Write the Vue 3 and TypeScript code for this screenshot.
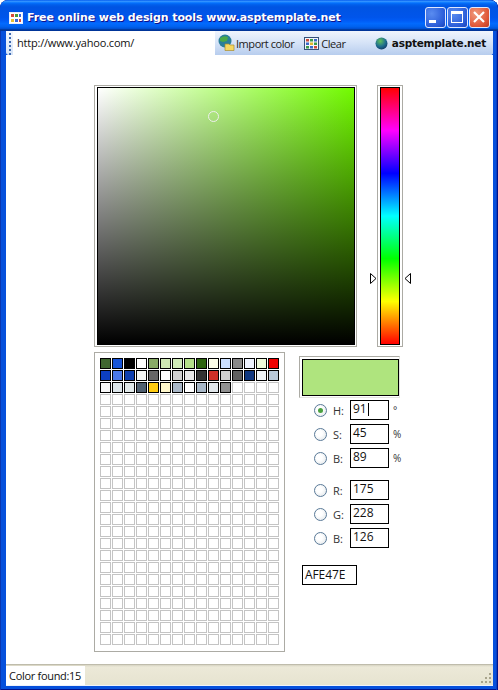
<script setup lang="ts">
const filled: string[] = [
  '#3f6630','#1854d8','#000000','#ffffff','#88aa66','#cfe8b4','#cfeab8','#b5e08a','#2e6410','#fbfde8','#cce0ff','#888888','#eef3ff','#eefadc','#ee0000',
  '#0d3fbf','#4a78e8','#0f40b0','#f6f8f6','#666666','#ffffff','#cfcfcf','#e8e8e8','#333333','#d03028','#d0d0d0','#606060','#103880','#eef4f8','#b8c8d8',
  '#f8f8f8','#dde6ea','#e2eaea','#506070','#ffcc11','#fff8cc','#aab8c8','#ffffff','#a8b8c8','#e0e6ea','#909090',
]
const cells = Array.from({ length: 15 * 24 }, (_, i) => filled[i] ?? '')
const hsb = [
  { l: 'H', v: '91', u: '°', on: true, caret: true },
  { l: 'S', v: '45', u: '%', on: false, caret: false },
  { l: 'B', v: '89', u: '%', on: false, caret: false },
]
const rgb = [
  { l: 'R', v: '175' },
  { l: 'G', v: '228' },
  { l: 'B', v: '126' },
]
</script>

<template>
  <div class="window">
    <header class="titlebar">
      <svg class="app-icon" width="14" height="12" viewBox="0 0 14 12">
        <rect x="0.5" y="0.5" width="13" height="11" fill="#fff" stroke="#e8eefc" />
        <rect x="2" y="2" width="3" height="3" fill="#d8483a" /><rect x="6" y="2" width="3" height="3" fill="#4a9a3a" /><rect x="10" y="2" width="2" height="3" fill="#3a68d8" />
        <rect x="2" y="7" width="3" height="3" fill="#e8c030" /><rect x="6" y="7" width="3" height="3" fill="#3a68d8" /><rect x="10" y="7" width="2" height="3" fill="#d8483a" />
      </svg>
      <span class="title">Free online web design tools www.asptemplate.net</span>
      <div class="winbtns">
        <div class="wb blue">
          <svg width="21" height="21" viewBox="0 0 21 21"><rect x="4" y="13" width="7" height="3" fill="#fff" /></svg>
        </div>
        <div class="wb blue">
          <svg width="21" height="21" viewBox="0 0 21 21"><rect x="4.5" y="4.5" width="11" height="11" fill="none" stroke="#fff" /><rect x="4" y="4" width="12" height="3" fill="#fff" /></svg>
        </div>
        <div class="wb red">
          <svg width="21" height="21" viewBox="0 0 21 21"><path d="M5 5 L15 15 M15 5 L5 15" stroke="#fff" stroke-width="2.2" /></svg>
        </div>
      </div>
    </header>

    <nav class="toolbar">
      <div class="grip"></div>
      <div class="url">http://www.yahoo.com/</div>
      <div class="tools">
        <div class="tool import">
          <svg width="18" height="18" viewBox="0 0 18 18">
            <circle cx="8" cy="7" r="6.5" fill="#2a7f9a" />
            <path d="M3 4 Q7 1 11 3 L10 7 L6 8 L3 7 Z" fill="#4aa84a" />
            <path d="M8 10 H12 L13 11 H17 V16.5 H8 Z" fill="#f6d860" stroke="#a88c30" stroke-width="0.7" />
          </svg>
          <span>Import color</span>
        </div>
        <div class="tool clear">
          <svg width="15" height="13" viewBox="0 0 15 13">
            <rect x="0.5" y="0.5" width="14" height="12" fill="#f4f6fa" stroke="#33507a" />
            <rect x="2" y="2" width="3" height="2.5" fill="#c94a3a" /><rect x="6" y="2" width="3" height="2.5" fill="#3a9a4a" /><rect x="10" y="2" width="3" height="2.5" fill="#3a68c8" />
            <rect x="2" y="5.5" width="3" height="2.5" fill="#3a68c8" /><rect x="6" y="5.5" width="3" height="2.5" fill="#e0b830" /><rect x="10" y="5.5" width="3" height="2.5" fill="#3a9a4a" />
            <rect x="2" y="9" width="3" height="2.5" fill="#3a9a4a" /><rect x="6" y="9" width="3" height="2.5" fill="#3a68c8" /><rect x="10" y="9" width="3" height="2.5" fill="#c94a3a" />
          </svg>
          <span>Clear</span>
        </div>
        <div class="tool site">
          <svg width="13" height="13" viewBox="0 0 13 13">
            <defs>
              <radialGradient id="gl" cx="0.4" cy="0.3" r="0.8"><stop offset="0" stop-color="#5fc05a" /><stop offset="0.55" stop-color="#1f6f8f" /><stop offset="1" stop-color="#0d2f60" /></radialGradient>
            </defs>
            <circle cx="6.5" cy="6.5" r="6" fill="url(#gl)" />
          </svg>
          <b>asptemplate.net</b>
        </div>
      </div>
    </nav>

    <main class="client">
      <div class="top">
        <div class="sv-frame">
          <div class="sv"><span class="ring"></span></div>
        </div>
        <div class="hue-wrap">
          <svg class="arrow left" width="7" height="11" viewBox="0 0 7 11"><path d="M0.5 0.5 L6 5.5 L0.5 10.5 Z" fill="#fff" stroke="#000" /></svg>
          <div class="hue-frame"><div class="hue"></div></div>
          <svg class="arrow right" width="7" height="11" viewBox="0 0 7 11"><path d="M6.5 0.5 L1 5.5 L6.5 10.5 Z" fill="#fff" stroke="#000" /></svg>
        </div>
      </div>

      <div class="bottom">
        <div class="palette">
          <div
            v-for="(c, i) in cells"
            :key="i"
            class="cell"
            :class="{ used: c }"
            :style="c ? { background: c } : undefined"
          ></div>
        </div>

        <div class="side">
          <div class="preview-frame"><div class="preview"></div></div>

          <div class="group">
            <div v-for="r in hsb" :key="r.l" class="row">
              <span class="radio" :class="{ on: r.on }"></span>
              <span class="lab">{{ r.l }}:</span>
              <span class="box">{{ r.v }}<i v-if="r.caret" class="caret"></i></span>
              <span class="unit">{{ r.u }}</span>
            </div>
          </div>

          <div class="group rgb">
            <div v-for="r in rgb" :key="r.l" class="row">
              <span class="radio"></span>
              <span class="lab">{{ r.l }}:</span>
              <span class="box">{{ r.v }}</span>
            </div>
          </div>

          <div class="hex">AFE47E</div>
        </div>
      </div>
    </main>

    <footer class="status">
      <div class="found">Color found:15</div>
      <svg class="sgrip" width="12" height="12" viewBox="0 0 12 12" fill="#a8a48c">
        <rect x="9" y="1" width="2" height="2" /><rect x="5" y="5" width="2" height="2" /><rect x="9" y="5" width="2" height="2" />
        <rect x="1" y="9" width="2" height="2" /><rect x="5" y="9" width="2" height="2" /><rect x="9" y="9" width="2" height="2" />
      </svg>
    </footer>
  </div>
</template>

<style>
html, body { margin: 0; background: #fff; }
</style>

<style scoped>
.window {
  width: 498px;
  height: 690px;
  box-sizing: border-box;
  padding: 0 5px 4px 6px;
  display: flex;
  flex-direction: column;
  background: #0650dc;
  border-radius: 8px 8px 0 0;
  box-shadow: inset 1px 0 #0a36b0, inset -1px 0 #00138c, inset -2px 0 #0a3fc0, inset 0 -1px #00138c;
  font-family: "Open Sans", "Liberation Sans", sans-serif;
  font-size: 11px;
  color: #111;
  overflow: hidden;
}
.titlebar {
  margin: 0 -5px 0 -6px;
  height: 31px;
  box-sizing: border-box;
  flex: none;
  display: flex;
  align-items: center;
  padding: 3px 8px 0 9px;
  background: linear-gradient(#0058ee 0, #3593ff 4%, #288eff 6%, #127dff 8%, #036ffc 10%, #0262ee 14%, #0057e5 20%, #0054e3 24%, #0055eb 56%, #005bf5 66%, #026afe 76%, #0062ef 86%, #0052d6 92%, #0040ab 94%, #003092 100%);
  border-radius: 8px 8px 0 0;
}
.app-icon { margin-top: 1px; }
.title {
  margin: 1px 0 0 4px;
  color: #fff;
  font-family: "DejaVu Sans", sans-serif;
  font-weight: 700;
  font-size: 11px;
  letter-spacing: -0.1px;
  text-shadow: 1px 1px #0f1089;
  white-space: nowrap;
}
.winbtns { margin-left: auto; display: flex; gap: 1px; }
.wb {
  width: 21px;
  height: 21px;
  border-radius: 3px;
  box-sizing: border-box;
  border: 1px solid #dfe8ff;
  overflow: hidden;
  display: flex;
  align-items: center;
  justify-content: center;
}
.wb svg { flex: none; }
.wb.blue { background: radial-gradient(circle at 30% 30%, #5a8cf0, #2a5cd8 70%, #1c44b8); }
.wb.red { background: radial-gradient(circle at 30% 30%, #f09a7c, #e0583a 65%, #c03a20); }

.toolbar {
  flex: none;
  height: 24px;
  display: flex;
  align-items: stretch;
  background: linear-gradient(#f4f8ff, #d6e4f8);
  border-radius: 0 0 3px 3px;
  overflow: hidden;
}
.grip {
  width: 7px;
  background: radial-gradient(circle at 1px 1px, #3f6ab0 1px, transparent 1px) 3px 2px / 3px 4px repeat-y;
}
.url {
  width: 202px;
  background: #fff;
  line-height: 23px;
  padding-left: 4px;
  box-sizing: border-box;
  font-size: 11px;
  letter-spacing: -0.2px;
  white-space: nowrap;
}
.tools {
  flex: 1;
  display: flex;
  align-items: center;
  background: linear-gradient(#f0f5fd 0, #d8e5f8 45%, #b7cdee 100%);
  color: #222;
}
.tool { display: flex; align-items: center; gap: 2px; white-space: nowrap; letter-spacing: -0.45px; }
.import { margin-left: 2px; gap: 1px; }
.clear { margin-left: 10px; gap: 2px; }
.site { margin-left: auto; margin-right: 7px; gap: 4px; }
.site b { color: #111; font-family: "DejaVu Sans", sans-serif; font-size: 10.5px; letter-spacing: -0.25px; }

.client {
  flex: 1;
  min-height: 0;
  background: #fff;
  padding: 30px 0 0 88px;
  overflow: hidden;
}
.top { display: flex; gap: 20px; }
.sv-frame, .hue-frame {
  border: 1px solid #acaba4;
  background: #fff;
}
.sv-frame { padding: 1px 1px 1px 2px; }
.hue-frame { padding: 1px 2px; }
.sv {
  position: relative;
  width: 256px;
  height: 256px;
  border: 1px solid #000;
  background:
    linear-gradient(to bottom, rgba(0, 0, 0, 0), #000),
    linear-gradient(to right, #fff, #72fa00);
}
.ring {
  position: absolute;
  left: 110px;
  top: 23px;
  width: 9px;
  height: 9px;
  border: 1px solid #eee;
  border-radius: 50%;
}
.hue-wrap { position: relative; }
.hue {
  width: 18px;
  height: 256px;
  border: 1px solid #000;
  background: linear-gradient(to bottom, #f00, #f0f 16.67%, #00f 33.33%, #0ff 50%, #0f0 66.67%, #ff0 83.33%, #f00);
}
.arrow { position: absolute; top: 188px; }
.arrow.left { left: -7px; }
.arrow.right { right: -8px; }

.bottom { display: flex; margin-top: 5px; }
.palette {
  flex: none;
  width: 191px;
  height: 300px;
  box-sizing: border-box;
  border: 1px solid #acaba4;
  padding: 5px 0 0 5px;
  display: grid;
  grid-template-columns: repeat(15, 10px);
  grid-auto-rows: 10px;
  gap: 2px;
}
.cell { border: 1px solid #c4c4c4; box-sizing: border-box; margin: 0 -2px -2px 0; }
.palette .cell { width: 11px; height: 11px; }
.cell.used { border-color: #000; }

.side { margin-left: 14px; padding-top: 4px; }
.preview-frame {
  width: 101px;
  height: 42px;
  box-sizing: border-box;
  border: 1px solid;
  border-color: #acaba4 #e4e4e0 #e4e4e0 #acaba4;
  padding: 2px;
}
.preview {
  width: 97px;
  height: 37px;
  box-sizing: border-box;
  border: 1px solid #000;
  background: #afe47e;
}
.group { padding-left: 15px; }
.group.rgb { margin-top: 8px; }
.row { display: flex; align-items: center; height: 24px; }
.radio {
  width: 13px;
  height: 13px;
  box-sizing: border-box;
  border: 1px solid #5a7a98;
  border-radius: 50%;
  background: radial-gradient(circle at 40% 40%, #fff 30%, #dce2e6 100%);
  position: relative;
}
.radio.on::after {
  content: "";
  position: absolute;
  left: 3px;
  top: 3px;
  width: 5px;
  height: 5px;
  border-radius: 50%;
  background: #4aa040;
}
.lab { width: 17px; margin-left: 6px; color: #333; }
.box {
  width: 39px;
  height: 20px;
  box-sizing: border-box;
  border: 1px solid #000;
  padding-left: 2px;
  line-height: 16px;
  font-size: 12px;
  display: flex;
  align-items: flex-start;
}
.caret { display: block; width: 1px; height: 13px; margin: 2px 0 0 1px; background: #000; }
.unit { margin-left: 4px; font-size: 10px; color: #333; line-height: 14px; }
.hex {
  margin-top: 15px;
  margin-left: 3px;
  width: 55px;
  height: 20px;
  box-sizing: border-box;
  border: 1px solid #000;
  padding-left: 2px;
  line-height: 17px;
  font-size: 12px;
  letter-spacing: -0.1px;
}

.status {
  flex: none;
  height: 22px;
  display: flex;
  align-items: stretch;
  justify-content: space-between;
  background: linear-gradient(#a7a495 0, #d7d4c2 1px, #ece9d8 3px, #e6e3d0 100%);
  border-bottom: 1px solid #eef2fb;
  box-sizing: border-box;
}
.found {
  margin-top: 2px;
  width: 79px;
  background: #fff;
  padding-left: 3px;
  box-sizing: border-box;
  line-height: 19px;
  white-space: nowrap;
  letter-spacing: -0.3px;
}
.sgrip { align-self: flex-end; margin: 0 1px 1px 0; }
</style>
